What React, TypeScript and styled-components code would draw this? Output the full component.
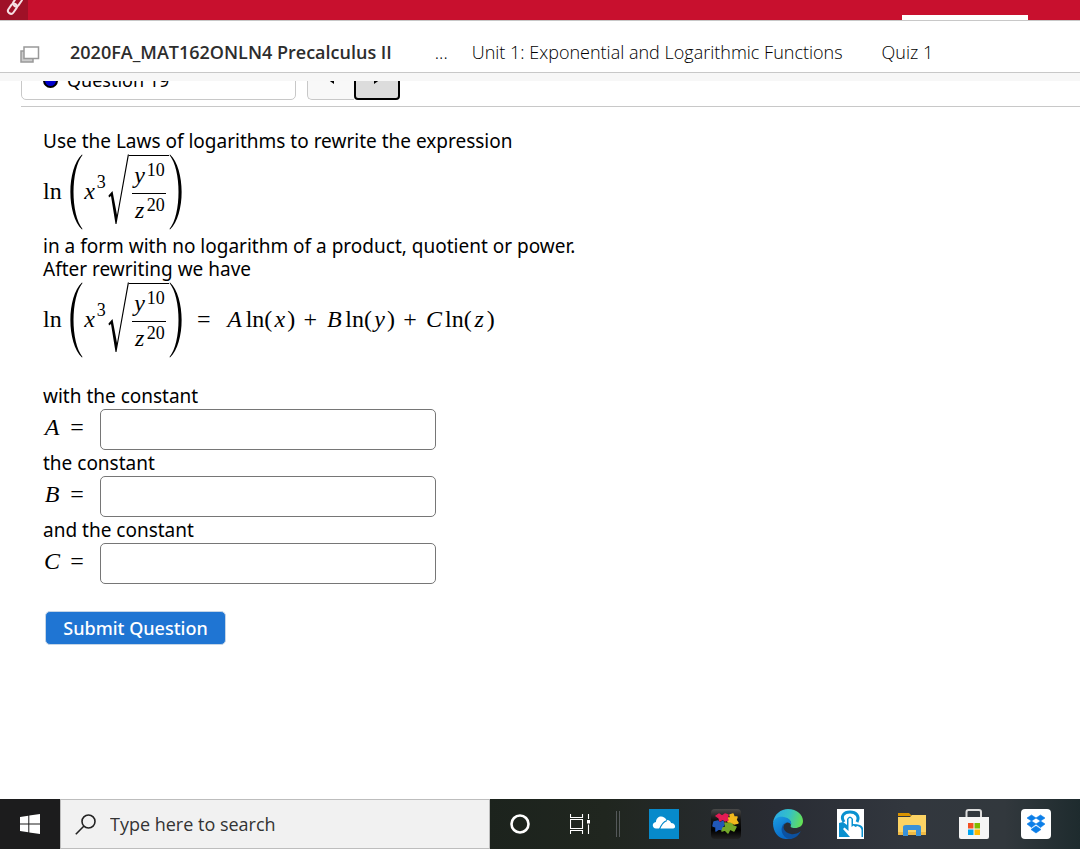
import React from "react";
import styled, { createGlobalStyle } from "styled-components";

const GlobalStyle = createGlobalStyle`
  * { box-sizing: border-box; }
  body { margin: 0; background: #fff; color: #000; }
  button, input { font: inherit; margin: 0; }
`;

const body = `"Noto Sans", "Open Sans", sans-serif`;
const ui = `"Open Sans", "Noto Sans", sans-serif`;
const serif = `"Liberation Serif", "Times New Roman", serif`;

const Page = styled.div`
  min-height: 100vh;
  display: flex;
  flex-direction: column;
  font-family: ${body};
`;

const Banner = styled.header`
  display: flex;
  justify-content: space-between;
  align-items: flex-end;
  height: 21px;
  background: #c8102e;
  border-bottom: 1px solid #c8c8c8;
`;

const BannerLink = styled.a`
  display: flex;
  align-items: flex-end;
  justify-content: center;
  width: 28px;
  height: 20px;
  padding: 0 0 5px 2px;
  overflow: hidden;
  background: #9f1127;
`;

const ActiveTab = styled.div`
  width: 126px;
  height: 5px;
  margin-right: 52px;
  background: #fff;
`;

const Crumbs = styled.nav`
  display: flex;
  align-items: center;
  height: 52px;
  padding: 10px 20px 0;
  border-bottom: 1px solid #c8c8c8;
  font: 18px/24px ${ui};
  white-space: nowrap;
`;

const WindowButton = styled.button`
  display: flex;
  width: 20px;
  padding: 5px 0 0;
  border: 0;
  background: none;
`;

const Crumb = styled.a<{ $strong?: boolean; $gap: number }>`
  margin-left: ${(p) => p.$gap}px;
  color: ${(p) => (p.$strong ? "#2d2d2d" : "#000")};
  font-weight: ${(p) => (p.$strong ? 600 : 300)};
  text-decoration: none;
`;

const Strip = styled.div`
  height: 8px;
  background: #f7f7f7;
`;

const QuestionBar = styled.div`
  display: flex;
  align-items: flex-end;
  height: 26px;
  margin-left: 21px;
  padding-bottom: 6px;
  overflow: hidden;
  border-bottom: 1px solid #c8c8c8;
`;

const QuestionPicker = styled.button`
  display: flex;
  align-items: center;
  gap: 9px;
  width: 275px;
  height: 40px;
  margin-right: 11px;
  padding: 0 20px 0 21px;
  border: 1px solid #c8c8c8;
  border-radius: 5px;
  background: #fff;
  font: 18px/24px ${body};
  color: #000;
`;

const Dot = styled.span`
  width: 15px;
  height: 15px;
  border: 2px solid #000;
  border-radius: 50%;
  background: #00c;
`;

const StepButton = styled.button<{ $current?: boolean }>`
  display: flex;
  align-items: center;
  justify-content: center;
  width: ${(p) => (p.$current ? 46 : 47)}px;
  height: 42px;
  padding: 0;
  border: ${(p) => (p.$current ? "2px solid #000" : "1px solid #c8c8c8")};
  border-right-width: ${(p) => (p.$current ? 2 : 0)}px;
  border-radius: ${(p) => (p.$current ? "4px" : "5px 0 0 5px")};
  background: ${(p) => (p.$current ? "#dcdcdc" : "#f8f8f8")};
`;

const Question = styled.main`
  flex: 1;
  padding: 23px 43px;
  font-size: 19px;
  line-height: 23px;
`;

const Line = styled.p`
  margin: 0;
`;

const Formula = styled.div`
  display: flex;
  align-items: center;
  height: 82px;
  padding-bottom: 6px;
  font: 24px/28px ${serif};
  white-space: nowrap;
`;

const Gap = styled.div`
  height: 22px;
`;

const Paren = styled.svg<{ $open?: boolean }>`
  flex: none;
  width: 13px;
  height: 76px;
  margin-top: 2px;
  margin-left: ${(p) => (p.$open ? 8 : 0)}px;
`;

const Radical = styled.svg`
  flex: none;
  width: 21px;
  height: 76px;
  margin-top: 2px;
  margin-left: 2px;
`;

const Radicand = styled.span`
  align-self: flex-start;
  width: 40px;
  height: 76px;
  margin-top: 2px;
  padding: 0 3px;
  border-top: 1px solid #000;
`;

const Part = styled.span<{ $top?: boolean }>`
  display: flex;
  justify-content: center;
  height: ${(p) => (p.$top ? 38 : 32)}px;
  padding-top: ${(p) => (p.$top ? 5 : 2)}px;
  border-bottom: ${(p) => (p.$top ? "1px solid #000" : "0")};
`;

const Letter = styled.i<{ $w: number }>`
  display: inline-block;
  width: ${(p) => p.$w}px;
  text-align: center;
`;

const Power = styled.sup`
  align-self: flex-start;
  font-size: 18px;
  line-height: 18px;
  vertical-align: top;
`;

const Base = styled.span`
  display: flex;
  padding-bottom: 4px;
  align-items: flex-end;
  height: 36px;
`;

const Term = styled.span`
  margin-left: 2px;
`;

const Sign = styled.span<{ $w: number }>`
  display: inline-block;
  width: ${(p) => p.$w}px;
  text-align: center;
`;

const Answer = styled.div`
  display: flex;
  height: 44px;
  padding-top: 1px;
`;

const AnswerLabel = styled.label`
  width: 57px;
  padding-top: 4px;
  font: 24px/28px ${serif};
  white-space: nowrap;
`;

const AnswerInput = styled.input`
  width: 336px;
  height: 41px;
  padding: 0 8px;
  border: 1px solid #767676;
  border-radius: 5px;
  background: #fff;
`;

const Submit = styled.button`
  display: block;
  margin: 25px 0 0 2px;
  width: 181px;
  height: 34px;
  padding: 0;
  border: 1px solid #c5d5e6;
  border-radius: 5px;
  background: #1f75d3;
  color: #fff;
  font: 18px/24px ${body};
  font-weight: 500;
`;

const Taskbar = styled.footer`
  display: flex;
  align-items: stretch;
  height: 50px;
  background: linear-gradient(90deg, #1c231d 45%, #20261f 56%, #292c34 72%, #32373e 84%, #32383d 93%, #1e2b2e);
`;

const TaskButton = styled.button<{ $w: number; $start?: boolean }>`
  display: flex;
  flex: none;
  align-items: center;
  justify-content: center;
  width: ${(p) => p.$w}px;
  padding: 0;
  border: 0;
  background: ${(p) => (p.$start ? "#1c1c1d" : "transparent")};
`;

const Search = styled.label`
  display: flex;
  flex: 0 1 430px;
  align-items: center;
  gap: 14px;
  padding-left: 14px;
  border: 1px solid #bdbdbd;
  background: #f1f1f1;
`;

const SearchInput = styled.input`
  flex: 1;
  min-width: 0;
  padding: 0;
  border: 0;
  outline: 0;
  background: none;
  font: 18px/24px ${ui};
  &::placeholder { color: #333; opacity: 1; }
`;

const Divider = styled.span`
  flex: none;
  align-self: center;
  width: 4px;
  height: 26px;
  margin: 0 13px 0 6px;
  border: solid #55595a;
  border-width: 0 1px;
`;

function Expression() {
  return (
    <>
      <span>ln</span>
      <Paren $open viewBox="0 0 13 76">
        <path d="M12 0.500C-3.500 15 -3.500 61 12 75.500L12.500 75C0.500 60 0.500 16 12.500 1Z" fill="#000" />
      </Paren>
      <Base>
        <Letter $w={14}>x</Letter>
        <Power>3</Power>
      </Base>
      <Radical viewBox="0 0 21 76">
        <path d="M0.500 41.500L4.500 37L9 61L19.800 0.500H21L8.500 70H7.500L3 42L1 43.500Z" fill="#000" />
      </Radical>
      <Radicand>
        <Part $top><Letter $w={14}>y</Letter><Power>10</Power></Part>
        <Part><Letter $w={14}>z</Letter><Power>20</Power></Part>
      </Radicand>
      <Paren viewBox="0 0 13 76">
        <path d="M1 0.500C16.500 15 16.500 61 1 75.500L0.500 75C12.500 60 12.500 16 0.500 1Z" fill="#000" />
      </Paren>
    </>
  );
}

function LogTerm({ constant, variable }: { constant: string; variable: string }) {
  return (
    <>
      <Letter $w={18}>{constant}</Letter>
      <Term>ln(</Term>
      <Letter $w={15}>{variable}</Letter>
      <span>)</span>
    </>
  );
}

const constants = [
  { name: "A", text: "with the constant" },
  { name: "B", text: "the constant" },
  { name: "C", text: "and the constant" },
];

const WindowsIcon = () => (
  <svg width="20" height="20" viewBox="0 0 20 20" fill="#fff">
    <path d="M0 3L8.300 1.800V9.500H0ZM9.300 1.600L20 0V9.500H9.300ZM0 10.500H8.300V18.200L0 17ZM9.300 10.500H20V20L9.300 18.400Z" />
  </svg>
);

const SearchIcon = () => (
  <svg width="21" height="21" viewBox="0 0 21 21" fill="none" stroke="#222" strokeWidth="1.600">
    <circle cx="13.500" cy="7.500" r="6.500" />
    <path d="M9 12L0.800 20.200" />
  </svg>
);

const CortanaIcon = () => (
  <svg width="20" height="20" viewBox="0 0 20 20">
    <circle cx="10" cy="10" r="8.500" fill="none" stroke="#fff" strokeWidth="2.600" />
  </svg>
);

const TaskViewIcon = () => (
  <svg width="20" height="20" viewBox="0 0 20 20" fill="none" stroke="#fff" strokeWidth="1.100">
    <path d="M0.500 0V3.500H12.500V0M0.500 20V16.500H12.500V20M0.500 5.500H12.500V14.500H0.500ZM18.500 0V5M18.500 10.500V20" />
    <path d="M17 6H20V9.500H17Z" fill="#fff" stroke="none" />
  </svg>
);

const CloudIcon = () => (
  <svg width="30" height="30" viewBox="0 0 30 30">
    <path d="M0 0H30V30H0Z" fill="#078acb" />
    <path d="M7 19.500C3 19.500 2.500 13.500 7 13C7 6.500 15 5.500 17.500 11C19.500 10.500 22 12 22 14C26.500 14 27.500 19.500 24 19.500Z" fill="#fff" />
    <path d="M10.500 20.500C12 16 14 13 18 11.500" fill="none" stroke="#078acb" strokeWidth="1.300" />
  </svg>
);

const PuzzleIcon = () => (
  <svg width="30" height="30" viewBox="0 0 30 30">
    <defs>
      <linearGradient id="gloss" x2="0" y2="1">
        <stop stopColor="#4a4a4a" /><stop offset=".35" stopColor="#151515" /><stop offset=".7" /><stop offset="1" stopColor="#222" />
      </linearGradient>
    </defs>
    <rect width="30" height="30" rx="4" fill="url(#gloss)" />
    <g strokeWidth="1.500" strokeLinejoin="round">
      <path d="M3 13L7 12L9 14L12 12L13 16L11 18L12 21L8 20L5 22L5 18L2 17Z" fill="#2158b8" stroke="#2158b8" />
      <path d="M14 14L18 15L20 14L22 17L25 18L23 22L19 20L17 24L14 21L11 22L12 19L15 18Z" fill="#75a82a" stroke="#75a82a" />
      <path d="M17 9L20 9L19 6L22 5L23 8L26 8L25 11L27 14L23 15L20 13L17 13Z" fill="#f2b91d" stroke="#f2b91d" />
      <path d="M5 7L8 5L11 7L14 5L17 6L16 9L17 11L14 12L12 10L9 12L8 9Z" fill="#e31b54" stroke="#e31b54" />
    </g>
  </svg>
);

const EdgeIcon = () => (
  <svg width="30" height="30" viewBox="0 0 30 30">
    <defs>
      <linearGradient id="edgeTop" x1="0" y1=".4" x2="1" y2=".6">
        <stop stopColor="#2aa9e6" /><stop offset=".5" stopColor="#35c1c6" /><stop offset="1" stopColor="#65e052" />
      </linearGradient>
      <linearGradient id="edgeSide" x2=".5" y2="1">
        <stop stopColor="#1b9de2" /><stop offset="1" stopColor="#0868c7" />
      </linearGradient>
    </defs>
    <path d="M0 14C1 5 8 0 15 0C24 0 30 6 30 12C30 17 26 19 22 19C18 19 17 18 18 16C19 12 15 9 11 9C5 9 1 12 0 14Z" fill="url(#edgeTop)" />
    <path d="M0 14C2 8 7 7 11 8C17 9 19 13 18 16C16 11 10 14 10 19C10 25 15 29 19 29C8 33 0 25 0 14Z" fill="url(#edgeSide)" />
    <path d="M13 13C8 17 11 24 18 25C22 26 27 23 28 22C25 28 20 30 17 30C9 29 5 18 13 13Z" fill="#0c51a0" />
  </svg>
);

const TouchIcon = () => (
  <svg width="27" height="30" viewBox="0 0 27 30">
    <path d="M0 0H27V30H0Z" fill="#fff" />
    <path d="M7 13C3 7 7 3 13 3C19 3 23 7 20 13" fill="none" stroke="#0a91d0" strokeWidth="3" />
    <path d="M2 14L6 13L10 16V10Q13 5 16 10V15Q25 15 26 19V28H2Z" fill="#0a91d0" />
    <path d="M11.500 10Q13 8 14.500 10V18L16.500 16.500L18.500 18L20.500 17Q24 18 24.500 21V28H13L6 20L7.500 18.500L11.500 22Z" fill="#fff" />
  </svg>
);

const FolderIcon = () => (
  <svg width="28" height="24" viewBox="0 0 28 24">
    <path d="M0 1H11L14 4H0Z" fill="#d99300" />
    <path d="M0 5H12L14 3H28V23H0Z" fill="#fcd364" />
    <path d="M0 20H28V23H0Z" fill="#efb944" />
    <path d="M5 24V15Q5 13 8 13H20Q23 13 23 15V24H18V18H10V24Z" fill="#3a91d8" />
  </svg>
);

const StoreIcon = () => (
  <svg width="30" height="30" viewBox="0 0 30 30">
    <path d="M7.500 9V3Q7.500 1 9.500 1H20Q22 1 22 3V9" fill="none" stroke="#ddd" strokeWidth="2" />
    <path d="M0 8H30V28Q30 30 28 30H2Q0 30 0 28Z" fill="#f5f5f5" />
    <path d="M9 14H14.500V19.500H9Z" fill="#f25022" />
    <path d="M15.500 14H21V19.500H15.500Z" fill="#7fba00" />
    <path d="M9 20.500H14.500V26H9Z" fill="#00a4ef" />
    <path d="M15.500 20.500H21V26H15.500Z" fill="#ffb900" />
  </svg>
);

const DropboxIcon = () => (
  <svg width="30" height="30" viewBox="0 0 30 30">
    <rect width="30" height="30" rx="4" fill="#fff" />
    <path d="M10.500 6L15 9L10.500 12L6 9ZM19.500 6L24 9L19.500 12L15 9ZM10.500 12L15 15L10.500 18.500L6 15ZM19.500 12L24 15L19.500 18.500L15 15ZM15 17L20 20.500L15 24L10 20.500Z" fill="#0b7ee8" stroke="#0b7ee8" strokeWidth="0.600" />
  </svg>
);

const apps = [
  { name: "Cloud drive", Icon: CloudIcon },
  { name: "Puzzle", Icon: PuzzleIcon },
  { name: "Edge", Icon: EdgeIcon },
  { name: "Touch", Icon: TouchIcon },
  { name: "File Explorer", Icon: FolderIcon },
  { name: "Store", Icon: StoreIcon },
  { name: "Dropbox", Icon: DropboxIcon },
];

export default function App() {
  return (
    <Page>
      <GlobalStyle />
      <Banner>
        <BannerLink href="#" aria-label="Links">
          <svg width="18" height="20" viewBox="0 0 18 20" fill="none" stroke="#f6dfe3" strokeWidth="2">
            <g transform="rotate(35 9 10)">
              <rect x="6" y="0" width="6" height="11" rx="3" />
              <rect x="6" y="9" width="6" height="11" rx="3" />
            </g>
          </svg>
        </BannerLink>
        <ActiveTab />
      </Banner>
      <Crumbs aria-label="Breadcrumb">
        <WindowButton aria-label="Open course menu">
          <svg width="20" height="17" viewBox="0 0 20 17" stroke="#999" strokeWidth="1.500">
            <path d="M1 5H13V16H1Z" fill="#ccc" />
            <path d="M4 1H18.500V12.500H4Z" fill="#fff" />
          </svg>
        </WindowButton>
        <Crumb href="#" $strong $gap={30}>2020FA_MAT162ONLN4 Precalculus II</Crumb>
        <Crumb href="#" $gap={43}>...</Crumb>
        <Crumb href="#" $gap={24}>Unit 1: Exponential and Logarithmic Functions</Crumb>
        <Crumb href="#" $gap={39}>Quiz 1</Crumb>
      </Crumbs>
      <Strip />
      <QuestionBar>
        <QuestionPicker><Dot />Question 19</QuestionPicker>
        <StepButton aria-label="Previous question">
          <svg width="8" height="10" viewBox="0 0 8 10"><path d="M7 0V10L0 5Z" /></svg>
        </StepButton>
        <StepButton $current aria-label="Next question">
          <svg width="8" height="10" viewBox="0 0 8 10"><path d="M1 0V10L8 5Z" /></svg>
        </StepButton>
      </QuestionBar>
      <Question>
        <Line>Use the Laws of logarithms to rewrite the expression</Line>
        <Formula><Expression /></Formula>
        <Line>in a form with no logarithm of a product, quotient or power.</Line>
        <Line>After rewriting we have</Line>
        <Formula>
          <Expression />
          <Sign $w={44}>=</Sign>
          <LogTerm constant="A" variable="x" />
          <Sign $w={30}>+</Sign>
          <LogTerm constant="B" variable="y" />
          <Sign $w={30}>+</Sign>
          <LogTerm constant="C" variable="z" />
        </Formula>
        <Gap />
        {constants.map(({ name, text }) => (
          <React.Fragment key={name}>
            <Line>{text}</Line>
            <Answer>
              <AnswerLabel htmlFor={name}><Letter $w={18}>{name}</Letter><Sign $w={32}>=</Sign></AnswerLabel>
              <AnswerInput id={name} type="text" />
            </Answer>
          </React.Fragment>
        ))}
        <Submit>Submit Question</Submit>
      </Question>
      <Taskbar>
        <TaskButton $w={60} $start aria-label="Start"><WindowsIcon /></TaskButton>
        <Search>
          <SearchIcon />
          <SearchInput type="text" placeholder="Type here to search" />
        </Search>
        <TaskButton $w={60} aria-label="Cortana"><CortanaIcon /></TaskButton>
        <TaskButton $w={60} aria-label="Task view"><TaskViewIcon /></TaskButton>
        <Divider />
        {apps.map(({ name, Icon }) => (
          <TaskButton key={name} $w={62} aria-label={name}><Icon /></TaskButton>
        ))}
      </Taskbar>
    </Page>
  );
}
